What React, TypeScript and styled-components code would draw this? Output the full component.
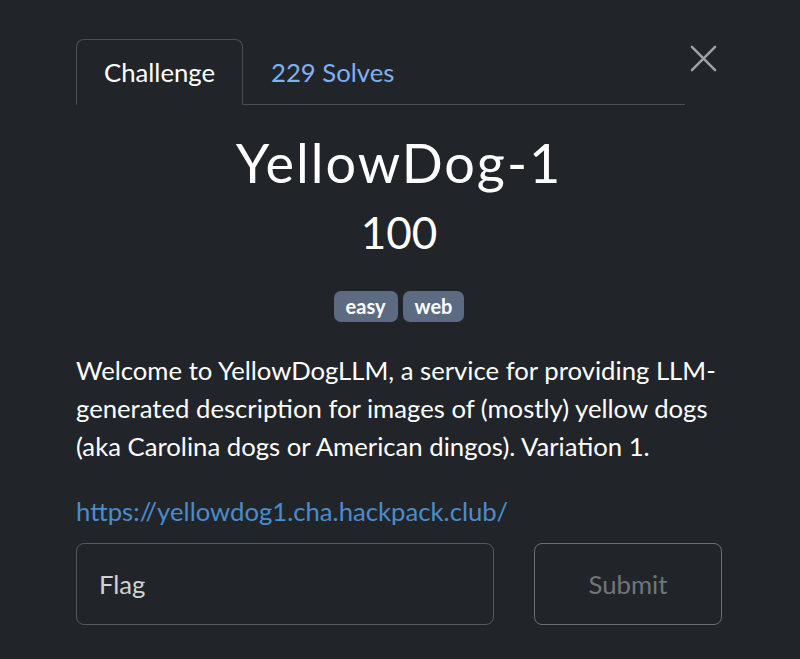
import React from "react";
import styled, { createGlobalStyle } from "styled-components";

const GlobalStyle = createGlobalStyle`
  html, body {
    margin: 0;
    padding: 0;
    background-color: #212529;
  }
  body {
    font-family: Lato, "Noto Sans", sans-serif;
    color: #ffffff;
  }
`;

const Modal = styled.div`
  width: 800px;
  height: 659px;
  box-sizing: border-box;
  padding: 39px 78px 0 76px;
  background-color: #212529;
`;

const Header = styled.div`
  display: flex;
  align-items: flex-start;
`;

const Tabs = styled.nav`
  flex: 1;
  display: flex;
  border-bottom: 1.5px solid #495057;
`;

const Tab = styled.button<{ $active?: boolean }>`
  height: 66px;
  box-sizing: border-box;
  padding: 0 27px;
  margin-bottom: -1.5px;
  font-family: Lato, sans-serif;
  font-size: 25.7px;
  background: ${(p) => (p.$active ? "#212529" : "transparent")};
  color: ${(p) => (p.$active ? "#ffffff" : "#7fb0f2")};
  border: 1.5px solid ${(p) => (p.$active ? "#495057" : "transparent")};
  border-bottom-color: ${(p) => (p.$active ? "#212529" : "transparent")};
  border-radius: 8px 8px 0 0;
  cursor: pointer;
`;

const CloseButton = styled.button`
  width: 37px;
  height: 36px;
  margin-top: 1px;
  padding: 0;
  display: flex;
  align-items: center;
  justify-content: center;
  background: transparent;
  border: none;
  color: #a0a3a6;
  cursor: pointer;
`;

const Title = styled.h3`
  margin: 26px 0 0;
  text-align: center;
  font-size: 54px;
  font-weight: 400;
  letter-spacing: 2px;
  line-height: 64px;
`;

const Points = styled.h4`
  margin: 10px 0 0;
  text-align: center;
  font-size: 44px;
  font-weight: 400;
  line-height: 54px;
`;

const Tags = styled.div`
  display: flex;
  justify-content: center;
  gap: 5px;
  margin-top: 32px;
`;

const Tag = styled.span`
  display: inline-flex;
  align-items: center;
  height: 31px;
  padding: 0 12px;
  border-radius: 7px;
  background-color: #5c6b82;
  color: #ffffff;
  font-size: 20px;
  font-weight: 700;
`;

const Description = styled.p`
  margin: 29px 0 0;
  font-size: 25.7px;
  line-height: 38px;
  color: #ffffff;
`;

const Link = styled.a`
  display: block;
  margin-top: 27px;
  font-size: 25.7px;
  line-height: 38px;
  color: #4b8ccc;
  text-decoration: none;
`;

const FlagRow = styled.form`
  display: flex;
  gap: 40px;
  margin-top: 13px;
`;

const FlagInput = styled.input`
  flex: 1;
  height: 82px;
  box-sizing: border-box;
  padding: 0 22px;
  font-family: Lato, sans-serif;
  font-size: 25.7px;
  color: #ffffff;
  background: transparent;
  border: 1.5px solid #54595e;
  border-radius: 8px;
  outline: none;
  &::placeholder {
    color: #d0d2d4;
  }
`;

const SubmitButton = styled.button`
  width: 188px;
  height: 82px;
  box-sizing: border-box;
  font-family: Lato, sans-serif;
  font-size: 25.7px;
  color: #6f757b;
  background: transparent;
  border: 1.5px solid #6c7177;
  border-radius: 8px;
`;

export default function App() {
  return (
    <>
      <GlobalStyle />
      <Modal>
        <Header>
          <Tabs>
            <Tab $active>Challenge</Tab>
            <Tab>229 Solves</Tab>
          </Tabs>
          <CloseButton aria-label="Close">
            <svg width="27" height="27" viewBox="0 0 28 28">
              <path
                d="M2 2 L26 26 M26 2 L2 26"
                stroke="currentColor"
                strokeWidth="2.6"
                strokeLinecap="round"
              />
            </svg>
          </CloseButton>
        </Header>
        <Title>YellowDog-1</Title>
        <Points>100</Points>
        <Tags>
          <Tag>easy</Tag>
          <Tag>web</Tag>
        </Tags>
        <Description>
          Welcome to YellowDogLLM, a service for providing LLM-generated
          description for images of (mostly) yellow dogs (aka Carolina dogs or
          American dingos). Variation 1.
        </Description>
        <Link href="#">https://yellowdog1.cha.hackpack.club/</Link>
        <FlagRow onSubmit={(e) => e.preventDefault()}>
          <FlagInput placeholder="Flag" />
          <SubmitButton type="submit" disabled>
            Submit
          </SubmitButton>
        </FlagRow>
      </Modal>
    </>
  );
}
